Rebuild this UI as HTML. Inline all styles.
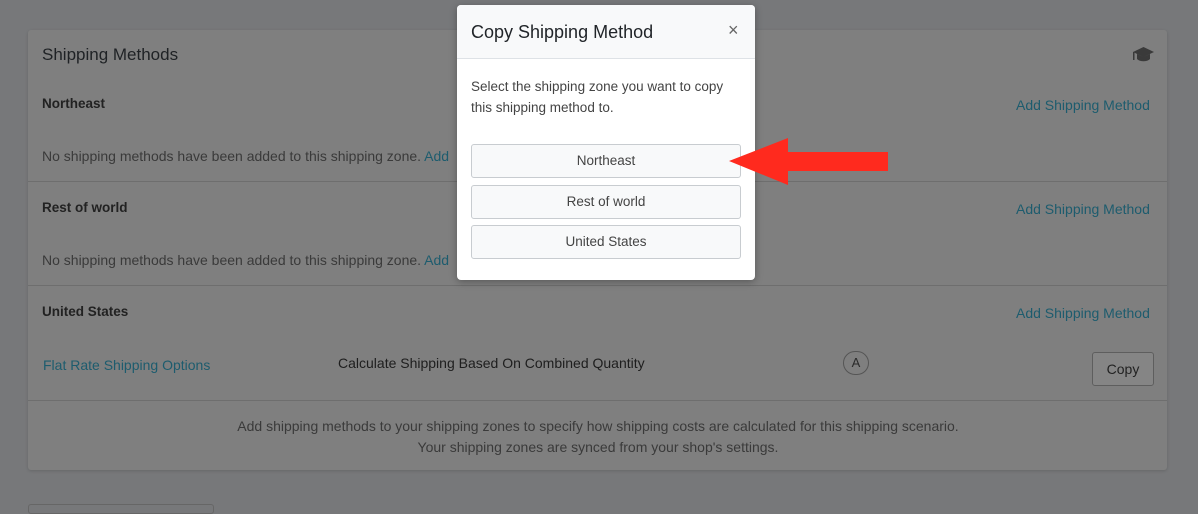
<!DOCTYPE html>
<html><head><style>
*{margin:0;padding:0;box-sizing:border-box}
body{width:1198px;height:507px;background:#77787a;font-family:"Liberation Sans",sans-serif;position:relative;overflow:hidden;color:#1e1e1e}
.card{position:absolute;left:28px;top:30px;width:1139px;height:440px;background:#7f7f7f;border-radius:3px;box-shadow:0 1px 3px rgba(0,0,0,.15)}
.t{position:absolute;white-space:nowrap}
.h{font-size:17px;color:#1f2225}
.z{font-size:13.5px;font-weight:bold;color:#222}
.m{font-size:14px;color:#3a3a3a}
.l{color:#1d5c6e;font-size:14px}
.hr{position:absolute;left:28px;width:1139px;height:1px;background:#6e6e6e}
.modal{position:absolute;left:457px;top:5px;width:298px;height:275px;background:#fff;border-radius:4px;box-shadow:0 2px 8px rgba(0,0,0,.3)}
.mh{height:54px;background:#f8f9fa;border-bottom:1px solid #dee2e6;border-radius:4px 4px 0 0;position:relative}
.btn{position:absolute;left:14px;width:270px;height:34px;border:1px solid #c8ccd0;border-radius:3px;background:#f8f9fa;text-align:center;line-height:32px;font-size:13.5px;color:#444}
</style></head><body>
<div class="card"></div>
<div class="t h" style="left:42px;top:45px">Shipping Methods</div>
<svg style="position:absolute;left:1132px;top:46px" width="23" height="18" viewBox="0 0 23 18"><path d="M11.5 1 L22 6 L11.5 11 L1 6Z M5 8 v5 c3 3 10 3 13 0 v-5 l-6.5 3 z" fill="#3a3a3a"/><rect x="1" y="6" width="1.5" height="8" fill="#3a3a3a"/></svg>
<div class="t z" style="left:42px;top:96px">Northeast</div>
<div class="t l" style="left:1016px;top:97px">Add Shipping Method</div>
<div class="t m" style="left:42px;top:148px">No shipping methods have been added to this shipping zone. <span class="l">Add</span></div>
<div class="hr" style="top:181px"></div>
<div class="t z" style="left:42px;top:200px">Rest of world</div>
<div class="t l" style="left:1016px;top:201px">Add Shipping Method</div>
<div class="t m" style="left:42px;top:252px">No shipping methods have been added to this shipping zone. <span class="l">Add</span></div>
<div class="hr" style="top:285px"></div>
<div class="t z" style="left:42px;top:304px">United States</div>
<div class="t l" style="left:1016px;top:305px">Add Shipping Method</div>
<div class="t l" style="left:43px;top:357px">Flat Rate Shipping Options</div>
<div class="t m" style="left:338px;top:355px;color:#1e1e1e">Calculate Shipping Based On Combined Quantity</div>
<div style="position:absolute;left:843px;top:351px;width:26px;height:24px;border:1px solid #555;border-radius:12px;text-align:center;line-height:22px;font-size:13px;color:#2a2a2a">A</div>
<div style="position:absolute;left:1092px;top:352px;width:62px;height:34px;border:1px solid #5e5e5e;border-radius:3px;background:#858585;text-align:center;line-height:32px;font-size:14px;color:#222">Copy</div>
<div class="hr" style="top:400px"></div>
<div class="t m" style="left:0;width:1196px;text-align:center;top:418px">Add shipping methods to your shipping zones to specify how shipping costs are calculated for this shipping scenario.</div>
<div class="t m" style="left:0;width:1196px;text-align:center;top:439px">Your shipping zones are synced from your shop's settings.</div>
<div style="position:absolute;left:28px;top:504px;width:186px;height:10px;border:1px solid #666;border-radius:3px"></div>
<div class="modal">
<div class="mh"><div class="t" style="left:14px;top:17px;font-size:18px;color:#212529">Copy Shipping Method</div><div class="t" style="left:271px;top:15px;font-size:18px;color:#666">×</div></div>
<div class="t" style="left:14px;top:71px;font-size:13.5px;color:#444;line-height:21px;width:272px;white-space:normal">Select the shipping zone you want to copy this shipping method to.</div>
<div class="btn" style="top:139px">Northeast</div>
<div class="btn" style="top:180px">Rest of world</div>
<div class="btn" style="top:220px">United States</div>
</div>
<svg style="position:absolute;left:0;top:0" width="1198" height="507"><path d="M729 161 L788 138 L788 152 L888 152 L888 171 L788 171 L788 185 Z" fill="#ff2a1e"/></svg>
</body></html>
